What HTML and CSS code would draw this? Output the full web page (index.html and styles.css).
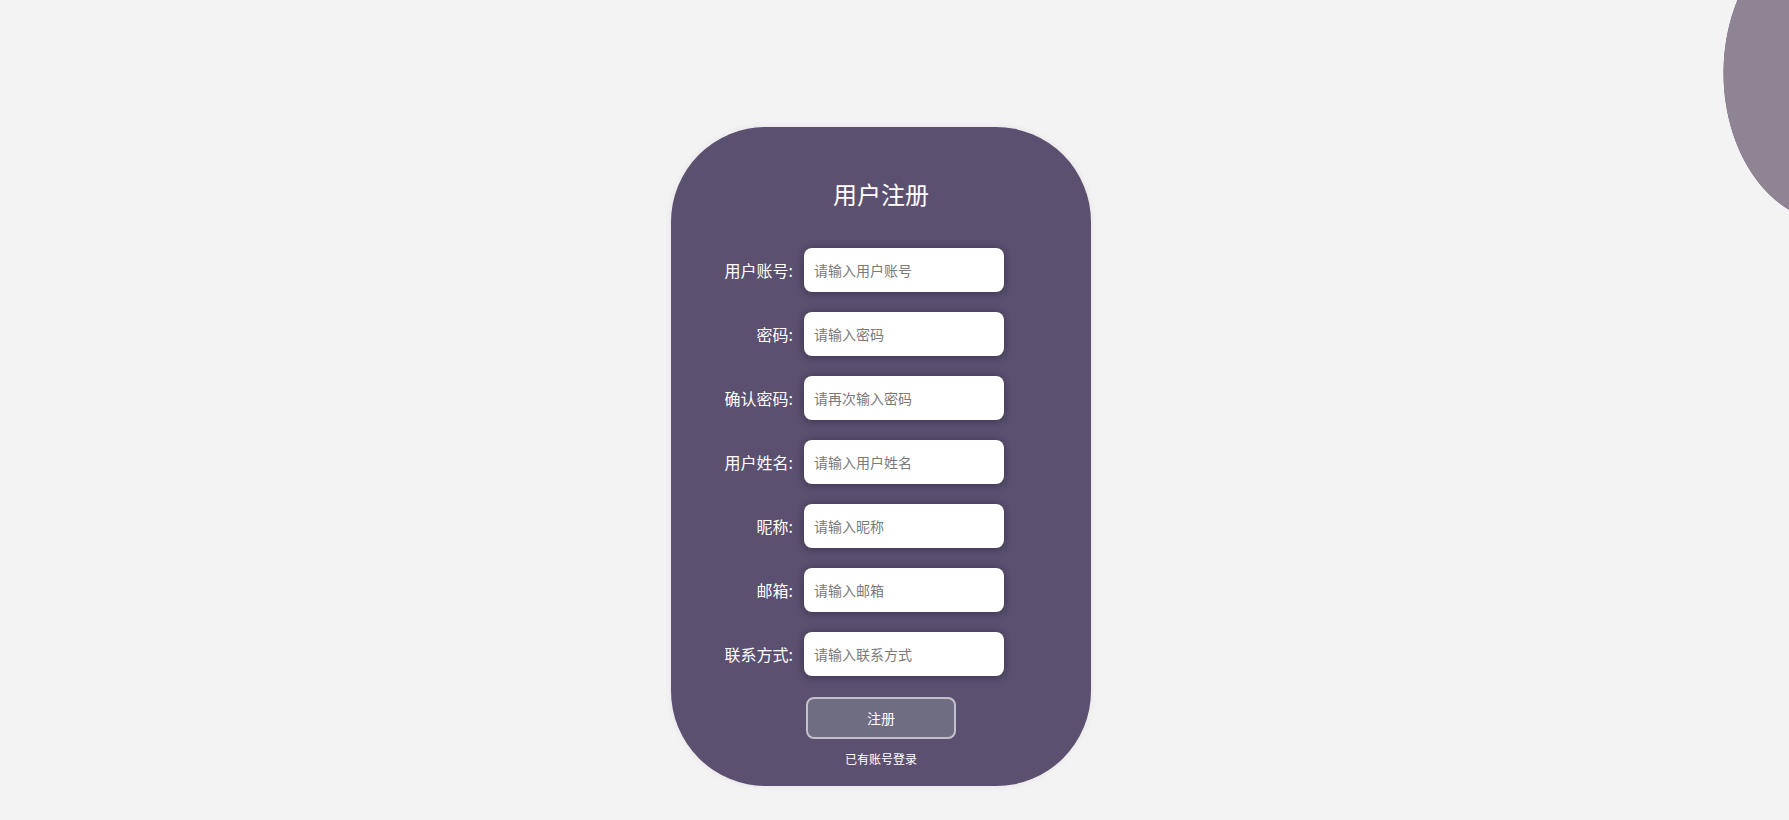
FILE: index.html
```html
<!DOCTYPE html>
<html lang="zh-CN">
<head>
<meta charset="utf-8">
<title>用户注册</title>
<link rel="stylesheet" href="styles.css">
</head>
<body>
<div class="blob"></div>
<div class="card">
  <h1 class="title">用户注册</h1>
  <form class="form">
    <div class="row"><label class="label">用户账号:</label><input class="input" type="text" placeholder="请输入用户账号"></div>
    <div class="row"><label class="label">密码:</label><input class="input" type="password" placeholder="请输入密码"></div>
    <div class="row"><label class="label">确认密码:</label><input class="input" type="password" placeholder="请再次输入密码"></div>
    <div class="row"><label class="label">用户姓名:</label><input class="input" type="text" placeholder="请输入用户姓名"></div>
    <div class="row"><label class="label">昵称:</label><input class="input" type="text" placeholder="请输入昵称"></div>
    <div class="row"><label class="label">邮箱:</label><input class="input" type="text" placeholder="请输入邮箱"></div>
    <div class="row"><label class="label">联系方式:</label><input class="input" type="text" placeholder="请输入联系方式"></div>
    <button class="btn" type="button">注册</button>
    <a class="link">已有账号登录</a>
  </form>
</div>
</body>
</html>
```
FILE: styles.css
```css
html, body {
  margin: 0;
  padding: 0;
  height: 100%;
  overflow: hidden;
}
body {
  background: #f4f3f4;
  font-family: "Noto Sans CJK SC", "Noto Sans", sans-serif;
  position: relative;
}
.blob {
  position: absolute;
  right: 0;
  top: 0;
  width: 66px;
  height: 224px;
  background: radial-gradient(ellipse 110px 150px at 110px 73px, #8e8493 99.4%, rgba(142, 132, 147, 0) 100%);
}
.card {
  box-sizing: border-box;
  width: 420px;
  height: 659px;
  margin: 127px 0 0 671px;
  padding-top: 51px;
  background: #5b506f;
  border-radius: 95px;
  box-shadow: 0 0 6px rgba(120, 100, 120, 0.12);
  display: flex;
  flex-direction: column;
  align-items: center;
}
.title {
  margin: 0;
  font-size: 24px;
  line-height: 32px;
  font-weight: 400;
  color: #ffffff;
}
.form {
  margin-top: 38px;
  width: 100%;
  display: flex;
  flex-direction: column;
  align-items: center;
}
.row {
  width: 100%;
  display: flex;
  align-items: center;
  margin-bottom: 20px;
}
.label {
  width: 133px;
  text-align: right;
  color: #ffffff;
  font-size: 16px;
  line-height: 44px;
  padding-right: 11px;
  box-sizing: border-box;
  flex: none;
}
.input {
  width: 200px;
  height: 44px;
  box-sizing: border-box;
  border: none;
  outline: none;
  border-radius: 8px;
  background: #ffffff;
  padding: 0 10px;
  font-family: "Noto Sans CJK SC", "Noto Sans", sans-serif;
  font-size: 14px;
  color: #333;
  box-shadow: 0 1px 8px rgba(20, 10, 30, 0.45);
}
.input::placeholder {
  color: #7a7a7a;
}
.btn {
  margin-top: 1px;
  width: 150px;
  height: 42px;
  box-sizing: border-box;
  border: 2px solid #c3bfcb;
  border-radius: 8px;
  background: #6e6d82;
  color: #ffffff;
  font-family: "Noto Sans CJK SC", "Noto Sans", sans-serif;
  font-size: 14px;
  cursor: pointer;
}
.link {
  margin-top: 12px;
  font-size: 12px;
  line-height: 16px;
  color: #ffffff;
  cursor: pointer;
}
```
